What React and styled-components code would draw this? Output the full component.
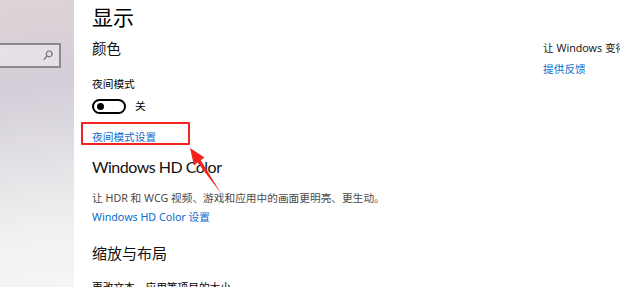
import React from 'react'
import styled, { createGlobalStyle } from 'styled-components';

const GlobalStyle = createGlobalStyle`
  html, body {
    margin: 0;
    padding: 0;
    background: #ffffff;
  }
  body {
    font-family: "Noto Sans", "Noto Sans CJK SC", sans-serif;
    color: #000;
  }
`;

const Page = styled.div`
  position: relative;
  display: flex;
  width: 620px;
  height: 287px;
  overflow: hidden;
  background: #fff;
`;

const Sidebar = styled.aside`
  flex: 0 0 74px;
  padding-top: 43px;
  background: linear-gradient(172deg, #ded4d7 0%, #d3cdd7 30%, #e4e2e6 58%, #f1f1f1 80%, #f5f5f5 100%);
`;

const SearchBox = styled.div`
  display: flex;
  align-items: center;
  justify-content: flex-end;
  box-sizing: border-box;
  width: 66px;
  height: 25px;
  margin-left: -5px;
  padding-right: 6px;
  border: 2px solid #8b8890;
  background: rgba(240, 238, 242, 0.55);
`;

const Main = styled.main`
  flex: 0 0 451px;
  padding-left: 18px;
  display: flex;
  flex-direction: column;
  align-items: flex-start;
`;

const PageTitle = styled.h1`
  margin: 6px 0 0;
  font-size: 21px;
  line-height: 23px;
  font-weight: 400;
`;

const SectionTitle = styled.h2`
  margin: ${p => p.$top}px 0 0;
  font-family: ${p => p.$latin ? '"Lato", "Noto Sans CJK SC", sans-serif' : 'inherit'};
  font-size: ${p => p.$size}px;
  line-height: ${p => p.$size + 2}px;
  letter-spacing: ${p => p.$latin ? '-0.5px' : 'normal'};
  font-weight: 400;
  color: #111;
  white-space: nowrap;
`;

const Label = styled.div`
  margin-top: ${p => p.$top}px;
  font-size: 10.7px;
  line-height: 12px;
  color: ${p => p.$muted ? '#4a4a4a' : '#000'};
  white-space: nowrap;
`;

const ToggleRow = styled.div`
  display: flex;
  align-items: center;
  gap: 9px;
  margin-top: 9px;
  font-size: 10.7px;
  line-height: 12px;
`;

const Toggle = styled.span`
  display: inline-flex;
  align-items: center;
  box-sizing: border-box;
  width: 34px;
  height: 15px;
  padding-left: 3px;
  border: 2px solid #000;
  border-radius: 8px;

  &::before {
    content: '';
    width: 7px;
    height: 7px;
    border-radius: 50%;
    background: #000;
  }
`;

const Link = styled.a`
  display: block;
  font-size: 10.7px;
  line-height: 12px;
  color: #0a6cce;
  text-decoration: none;
  white-space: nowrap;
  margin-top: ${p => p.$top || 0}px;
`;

const Highlight = styled.div`
  box-sizing: border-box;
  width: 109px;
  height: 27px;
  margin: 8px 0 0 -11px;
  padding: 7px 0 0 9px;
  border: 2px solid #f2241f;
  border-radius: 1px;
`;

const Aside = styled.section`
  flex: 1;
  min-width: 0;
  padding-top: 42px;
  overflow: hidden;
`;

const AsideText = styled.div`
  font-size: 10.7px;
  line-height: 12px;
  color: #222;
  white-space: nowrap;
`;

const Arrow = styled.svg`
  position: absolute;
  left: 0;
  top: 0;
  pointer-events: none;
`;

const SearchIcon = () => (
  <svg width="10" height="11" viewBox="0 0 10 11" fill="none" stroke="#6f6c74" strokeWidth="1.2">
    <circle cx="6.2" cy="3.9" r="2.9" />
    <line x1="4.1" y1="6" x2="0.8" y2="9.6" />
  </svg>
);

export default function App() {
  return (
    <>
      <GlobalStyle />
      <Page>
        <Sidebar>
          <SearchBox>
            <SearchIcon />
          </SearchBox>
        </Sidebar>
        <Main>
          <PageTitle>显示</PageTitle>
          <SectionTitle $top={11} $size={14.5}>颜色</SectionTitle>
          <Label $top={21}>夜间模式</Label>
          <ToggleRow>
            <Toggle />
            <span>关</span>
          </ToggleRow>
          <Highlight>
            <Link href="#">夜间模式设置</Link>
          </Highlight>
          <SectionTitle $top={13} $size={16} $latin>Windows HD Color</SectionTitle>
          <Label $top={16} $muted>让 HDR 和 WCG 视频、游戏和应用中的画面更明亮、更生动。</Label>
          <Link href="#" $top={7}>Windows HD Color 设置</Link>
          <SectionTitle $top={22} $size={15}>缩放与布局</SectionTitle>
          <Label $top={19}>更改文本、应用等项目的大小</Label>
        </Main>
        <Aside>
          <AsideText>让 Windows 变得更好</AsideText>
          <Link href="#" $top={9}>提供反馈</Link>
        </Aside>
        <Arrow width="620" height="287" viewBox="0 0 620 287">
          <polygon points="190,148 204.5,157.5 200.8,160.3 221.5,194 197.6,162.4 194,165.5" fill="#f2241f" />
        </Arrow>
      </Page>
    </>
  );
}
